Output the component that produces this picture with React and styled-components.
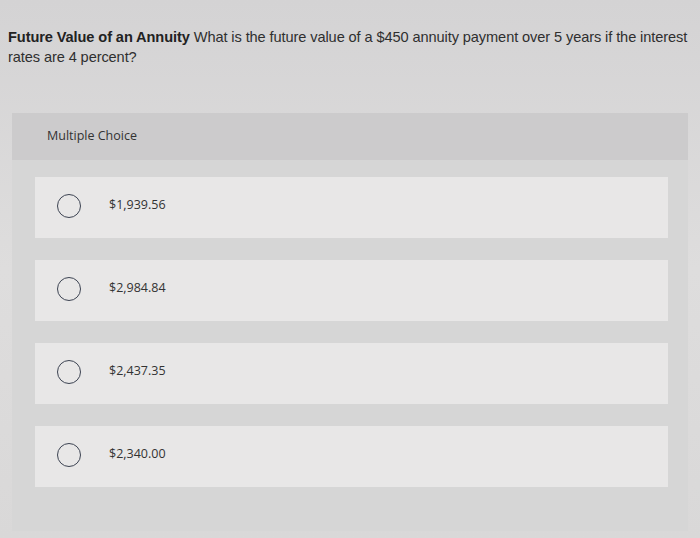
import React from 'react'
import styled, { createGlobalStyle } from 'styled-components'

const GlobalStyle = createGlobalStyle`
	body {
		margin: 0;
		background: #d9d8d9;
		font-family: "Liberation Sans", Arial, sans-serif;
	}
`

const choices = ['$1,939.56', '$2,984.84', '$2,437.35', '$2,340.00']

function Choice(props){
	return(
		<Row>
			<Radio />
			<Label>{props.text}</Label>
		</Row>
	)
}

export default function App(){
	return(
		<Page>
			<GlobalStyle />
			<Question>
				<Line>
					<Title>Future Value of an Annuity</Title>
					<span>What is the future value of a $450 annuity payment over 5 years if the interest</span>
				</Line>
				<Line>rates are 4 percent?</Line>
			</Question>
			<Panel>
				<Header>Multiple Choice</Header>
				<List>
					{choices.map(c => <Choice key={c} text={c} />)}
				</List>
			</Panel>
		</Page>
	)
}

const Page = styled.div`
	width: 700px;
	height: 538px;
	overflow: hidden;
	background: linear-gradient(180deg, #d4d3d4 0%, #dedddd 50%, #d9d8d8 100%);
	padding-top: 27px;
	box-sizing: border-box;
`

const Question = styled.div`
	margin: 0 0 0 8px;
	font-size: 14.6px;
	line-height: 20px;
	color: #2f2f2f;
	letter-spacing: -0.1px;
`

const Line = styled.div`
	white-space: nowrap;
`

const Title = styled.b`
	color: #222;
	margin-right: 4px;
`

const Panel = styled.div`
	margin: 46px 12px 0 12px;
	background: #d6d6d6;
	padding-bottom: 44px;
`

const Header = styled.div`
	height: 47px;
	background: #cccbcc;
	font-family: "Open Sans", sans-serif;
	font-size: 12.5px;
	color: #333;
	padding-left: 35px;
	padding-bottom: 3px;
	box-sizing: border-box;
	display: flex;
	align-items: center;
`

const List = styled.div`
	display: flex;
	flex-direction: column;
	gap: 22px;
	padding: 17px 20px 0 23px;
`

const Row = styled.div`
	height: 61px;
	background: #e8e7e7;
	display: flex;
	align-items: center;
	padding-left: 22px;
`

const Radio = styled.span`
	width: 24px;
	height: 24px;
	border: 1.8px solid #3c4352;
	border-radius: 50%;
	box-sizing: border-box;
	flex: none;
	margin-top: -4px;
`

const Label = styled.span`
	margin-left: 28px;
	font-family: "Open Sans", sans-serif;
	font-size: 12.5px;
	color: #333;
	margin-top: -6px;
`
